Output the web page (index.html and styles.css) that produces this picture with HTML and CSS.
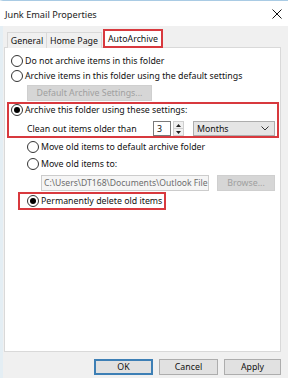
FILE: index.html
```html
<!DOCTYPE html>
<html>
<head>
<meta charset="utf-8">
<title>Junk Email Properties</title>
<link rel="stylesheet" href="styles.css">
</head>
<body>
<div class="window">
  <div class="titlebar">
    <span class="title">Junk Email Properties</span>
    <svg class="close" width="10" height="10" viewBox="0 0 10 10"><path d="M0.5 0.5 L9.5 9.5 M9.5 0.5 L0.5 9.5" stroke="#111" stroke-width="1" fill="none"/></svg>
  </div>
  <div class="tabs">
    <div class="tab">General</div>
    <div class="tab">Home Page</div>
    <div class="tab active">AutoArchive</div>
  </div>
  <div class="panel">
    <div class="opt"><span class="radio"></span><span>Do not archive items in this folder</span></div>
    <div class="opt"><span class="radio"></span><span>Archive items in this folder using the default settings</span></div>
    <div class="btn disabled defbtn">Default Archive Settings...</div>
    <div class="hl hl1">
      <div class="opt opt-first"><span class="radio checked"></span><span>Archive this folder using these settings:</span></div>
      <div class="clean">
        <span class="clean-label">Clean out items older than</span>
        <span class="spin-val">3</span>
        <span class="spin-btns">
          <span class="spin-b"><svg width="5" height="3" viewBox="0 0 5 3"><path d="M0 3 L2.5 0 L5 3 Z" fill="#222"/></svg></span>
          <span class="spin-b"><svg width="5" height="3" viewBox="0 0 5 3"><path d="M0 0 L2.5 3 L5 0 Z" fill="#222"/></svg></span>
        </span>
        <span class="select"><span>Months</span><svg width="8" height="5" viewBox="0 0 8 5"><path d="M0.5 0.5 L4 4 L7.5 0.5" stroke="#333" stroke-width="1" fill="none"/></svg></span>
      </div>
    </div>
    <div class="sub">
      <div class="opt"><span class="radio"></span><span>Move old items to default archive folder</span></div>
      <div class="opt opt-gap"><span class="radio"></span><span>Move old items to:</span></div>
      <div class="pathrow">
        <span class="path"><span class="path-text">C:\Users\DT168\Documents\Outlook File</span></span>
        <span class="btn disabled browse">Browse...</span>
      </div>
      <div class="hl hl2">
        <div class="opt"><span class="radio checked"></span><span>Permanently delete old items</span></div>
      </div>
    </div>
  </div>
  <div class="actions">
    <span class="btn ok">OK</span>
    <span class="btn">Cancel</span>
    <span class="btn apply">Apply</span>
  </div>
</div>
</body>
</html>
```
FILE: styles.css
```css
* { box-sizing: border-box; }
html, body { margin: 0; padding: 0; }
body {
  width: 288px;
  height: 378px;
  overflow: hidden;
  background: #f0f0f0;
  font-family: "Noto Sans", "Open Sans", sans-serif;
  font-size: 8.8px;
  color: #111;
}
.window {
  height: 378px;
  border-left: 3px solid #e4eef4;
  border-top: 1px solid #a9cbe4;
}
.titlebar {
  height: 25px;
  background: #fff;
  display: flex;
  align-items: center;
  justify-content: space-between;
  margin-left: -3px;
  padding: 1px 6px 0 5px;
}
.title { font-size: 9.2px; color: #222; }
.close { display: block; }
.tabs {
  display: flex;
  align-items: flex-end;
  margin-top: 3px;
  padding-left: 4px;
  height: 19px;
  position: relative;
  z-index: 1;
  margin-bottom: -1px;
}
.tab {
  height: 16px;
  border: 1px solid #d9d9d9;
  border-bottom: none;
  background: #f0f0f0;
  padding: 0 2px;
  display: flex;
  align-items: center;
  justify-content: center;
  width: 40px;
  white-space: nowrap;
}
.tab + .tab { border-left: none; width: 55px; }
.tab.active {
  height: 19px;
  width: 60px;
  margin-left: 1px;
  border: 2px solid #d8393e;
  background: #fff;
}
.panel {
  width: 277px;
  margin-left: 1px;
  height: 305px;
  background: #fff;
  border: 1px solid #d9d9d9;
  padding: 5px 0 0 6px;
}
.opt {
  display: flex;
  align-items: center;
  height: 15px;
  white-space: nowrap;
}
.radio {
  width: 12px;
  height: 12px;
  border: 1px solid #333;
  border-radius: 50%;
  margin-right: 2px;
  flex: none;
  display: flex;
  align-items: center;
  justify-content: center;
  background: #fff;
}
.radio.checked::after {
  content: "";
  width: 6px;
  height: 6px;
  border-radius: 50%;
  background: #000;
}
.btn {
  display: flex;
  align-items: center;
  justify-content: center;
  height: 16px;
  width: 59px;
  background: #e1e1e1;
  border: 1px solid #adadad;
  white-space: nowrap;
}
.btn.disabled {
  background: #d6d6d6;
  border-color: #cfcfcf;
  color: #a0a0a0;
}
.defbtn {
  width: 125px;
  margin: 2px 0 0 16px;
}
.hl {
  border: 2px solid #d8393e;
}
.hl1 {
  margin: 1px 0 0 -4px;
  width: 272px;
  padding-left: 2px;
}
.hl1 .opt-first { height: 12px; }
.clean {
  display: flex;
  align-items: center;
  height: 15px;
  margin-top: 5px;
  padding-left: 16px;
}
.clean-label { width: 126px; white-space: nowrap; }
.spin-val {
  width: 18px;
  height: 15px;
  border: 1px solid #7a7a7a;
  background: #fff;
  display: flex;
  align-items: center;
  padding-left: 3px;
}
.spin-btns {
  display: flex;
  flex-direction: column;
  margin-left: 2px;
  width: 11px;
  height: 15px;
}
.spin-b {
  flex: 1;
  background: #f0f0f0;
  border: 1px solid #cfcfcf;
  display: flex;
  align-items: center;
  justify-content: center;
}
.spin-b + .spin-b { border-top: none; }
.spin-b svg { display: block; }
.select {
  margin-left: 9px;
  width: 82px;
  height: 15px;
  background: #e5e5e5;
  border: 1px solid #adadad;
  display: flex;
  align-items: center;
  justify-content: space-between;
  padding: 0 5px 0 3px;
}
.select svg { display: block; }
.sub {
  padding-left: 16px;
  margin-top: 1px;
}
.opt-gap { margin-top: 2px; }
.pathrow {
  display: flex;
  margin-top: 4px;
  margin-left: 14px;
  gap: 8px;
}
.path {
  width: 168px;
  height: 16px;
  border: 1px solid #cccccc;
  background: #f5f5f5;
  color: #6d6d6d;
  overflow: hidden;
  display: flex;
  align-items: center;
  padding-left: 2px;
}
.path-text { white-space: nowrap; font-size: 8.6px; }
.browse { width: 58px; }
.hl2 {
  margin: 1px 0 0 -9px;
  width: 148px;
  padding-left: 7px;
  height: 18px;
}
.hl2 .opt { height: 14px; }
.actions {
  display: flex;
  justify-content: flex-end;
  gap: 6px;
  margin-top: 7px;
  padding-right: 7px;
}
.ok { border: 2px solid #3d7fb5; }
.apply { width: 57px; }
```
